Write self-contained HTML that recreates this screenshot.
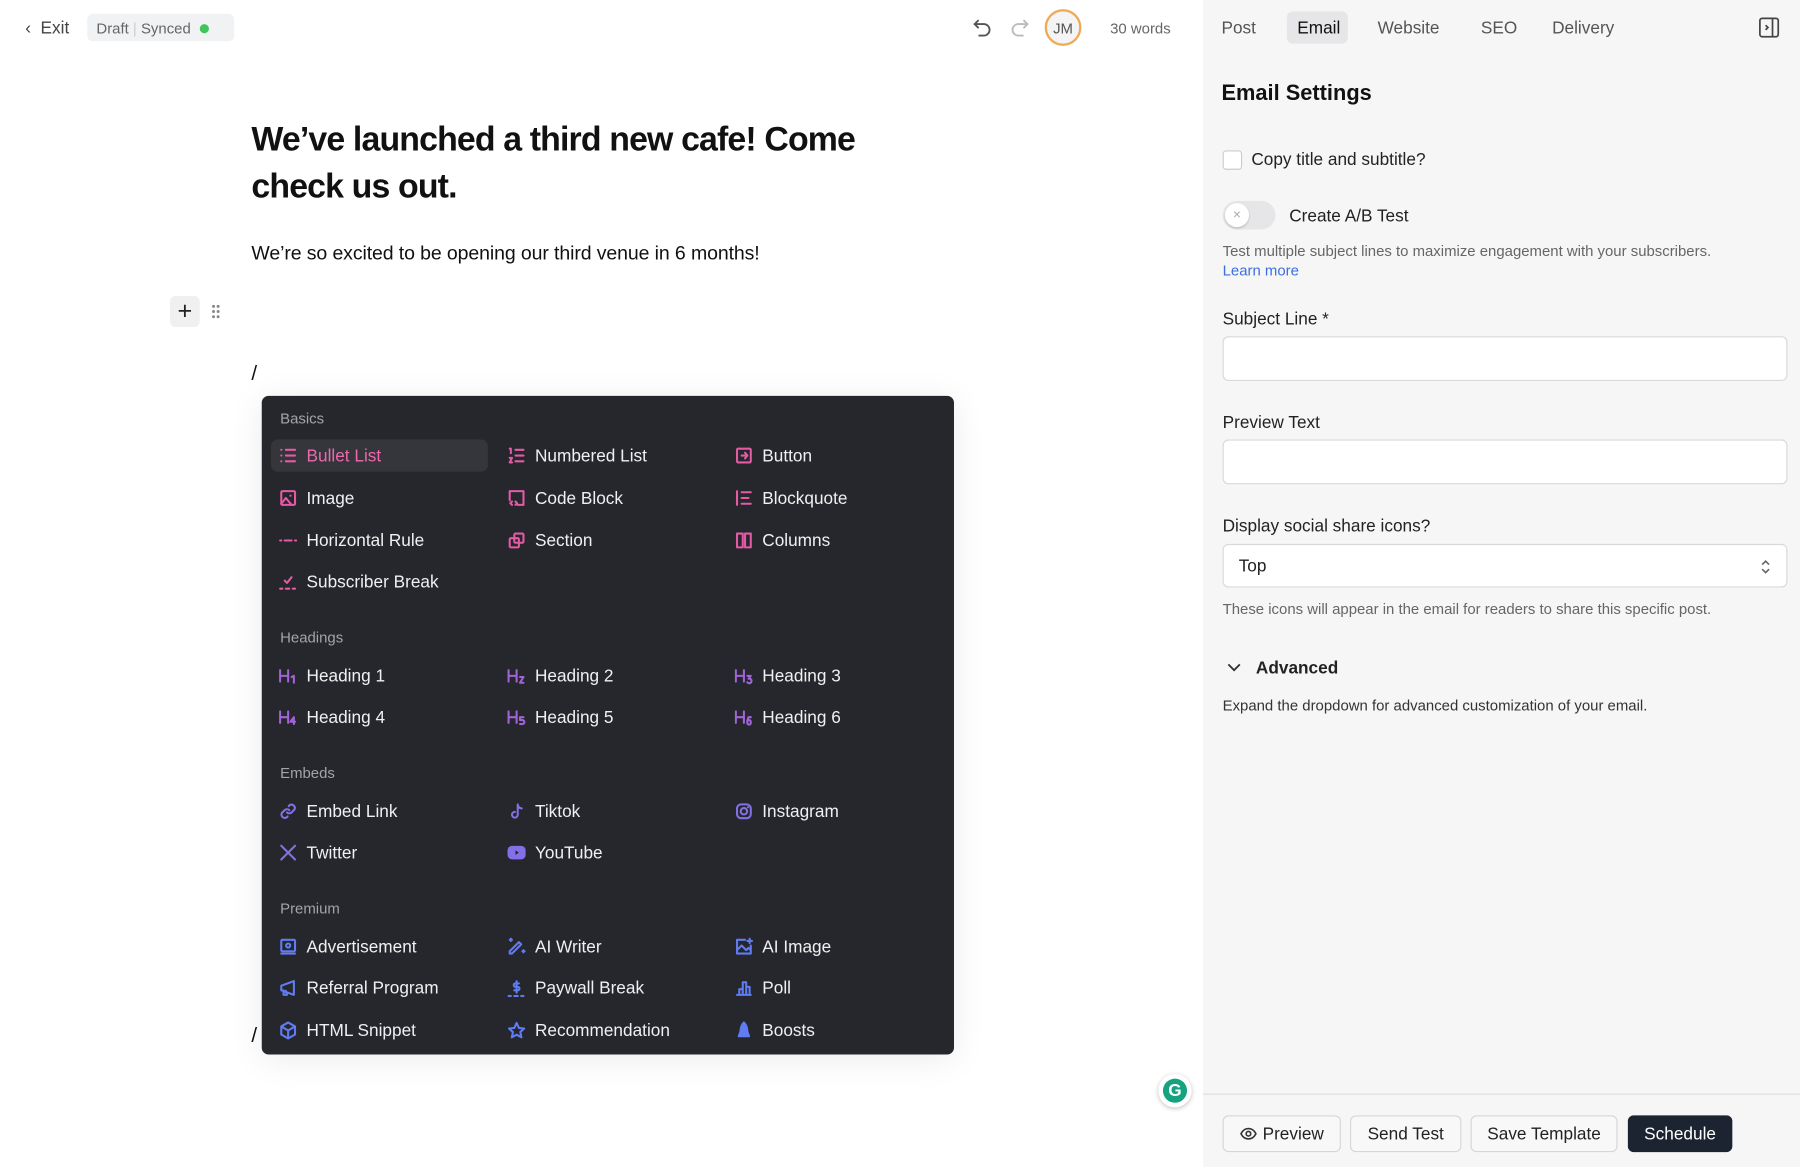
<!DOCTYPE html>
<html><head><meta charset="utf-8"><style>
*{box-sizing:border-box;margin:0;padding:0}
html,body{width:1800px;height:1167px;overflow:hidden;background:#fff;font-family:"Liberation Sans",Arial,sans-serif}
#s{position:absolute;left:0;top:0;width:1568px;height:1017px;transform:scale(1.148,1.1475);transform-origin:0 0}
.a{position:absolute;white-space:nowrap}
.m{position:absolute;left:228px;top:345px;width:603px;height:574px;background:#26272c;border-radius:6px;box-shadow:0 4px 30px rgba(0,0,0,.08)}
.lbl{position:absolute;color:#a3a4aa;font-size:13px}
.it{position:absolute;color:#f0f0f2;font-size:15px;height:20px;line-height:22px;white-space:nowrap}
.it svg{position:absolute;left:-24px;top:2px;width:16px;height:16px;fill:none;stroke-width:1.8;stroke-linecap:round;stroke-linejoin:round}
.p svg{stroke:#e45aa4}.h svg{stroke:#a163d8}.e svg{stroke:#8470e6}.r svg{stroke:#5f7cf2}
.rp{position:absolute;left:1048px;top:0;width:520px;height:1017px;background:#f6f6f6}
.t{color:#555;font-size:15px;position:absolute;top:16px}
.inp{position:absolute;left:1065px;width:492px;background:#fff;border:1px solid #d9d9dc;border-radius:5px}
.fl{position:absolute;left:1065px;font-size:15px;color:#222}
.btn{position:absolute;top:972px;height:32px;border:1px solid #d6d6d9;border-radius:5px;background:#f8f8f8;font-size:15px;color:#222;line-height:31px;text-align:center}
</style></head><body><div id="s">
<!-- top bar -->
<div class="a" style="left:22px;top:16px;font-size:15px;color:#444">‹ &nbsp;Exit</div>
<div class="a" style="left:76px;top:12px;width:128px;height:24px;background:#f1f2f4;border-radius:5px;font-size:13px;color:#666;line-height:25px;padding-left:8px">Draft <span style="color:#ccc">|</span> Synced <span style="display:inline-block;width:8px;height:8px;border-radius:50%;background:#3fc55a;margin-left:4px"></span></div>
<svg class="a" style="left:847px;top:15px" width="18" height="18" viewBox="0 0 18 18" fill="none" stroke="#555" stroke-width="1.6" stroke-linecap="round"><path d="M5 3L2 6l3 3"/><path d="M2 6h8a5 5 0 010 10H6"/></svg>
<svg class="a" style="left:879px;top:15px" width="18" height="18" viewBox="0 0 18 18" fill="none" stroke="#bbb" stroke-width="1.6" stroke-linecap="round"><path d="M13 3l3 3-3 3"/><path d="M16 6H8a5 5 0 000 10h4"/></svg>
<div class="a" style="left:910px;top:8px;width:32px;height:32px;border:2px solid #f0a955;border-radius:50%;background:#f4f4f4;font-size:13px;color:#555;text-align:center;line-height:29px">JM</div>
<div class="a" style="left:967px;top:17px;font-size:13px;color:#666">30 words</div>
<!-- editor -->
<div class="a" style="left:219px;top:101px;font-size:29.5px;font-weight:bold;line-height:41px;color:#111;letter-spacing:-.75px">We’ve launched a third new cafe! Come<br>check us out.</div>
<div class="a" style="left:219px;top:211px;font-size:17px;color:#111;letter-spacing:-.1px">We’re so excited to be opening our third venue in 6 months!</div>
<div class="a" style="left:148px;top:258px;width:26px;height:27px;background:#f0f0f0;border-radius:5px;font-size:22px;line-height:26px;text-align:center;color:#222">+</div>
<svg class="a" style="left:184px;top:265px" width="8" height="13"><g fill="#888"><circle cx="2" cy="2" r="1.3"/><circle cx="6" cy="2" r="1.3"/><circle cx="2" cy="6.5" r="1.3"/><circle cx="6" cy="6.5" r="1.3"/><circle cx="2" cy="11" r="1.3"/><circle cx="6" cy="11" r="1.3"/></g></svg>
<div class="a" style="left:219px;top:315px;font-size:18px;color:#111">/</div>
<div class="a" style="left:219px;top:892px;font-size:18px;color:#111">/</div>
<div class="m">
<div class="lbl" style="left:16px;top:12px">Basics</div>
<div style="position:absolute;left:8px;top:38px;width:189px;height:28px;background:#35363c;border-radius:6px"></div>
<div class="it p" style="left:39px;top:42px;color:#ef66ad"><svg viewBox="0 0 16 16"><path d="M2 3h.1M2 8h.1M2 13h.1M6 3h8M6 8h8M6 13h8"/></svg>Bullet List</div>
<div class="it p" style="left:238px;top:42px"><svg viewBox="0 0 16 16"><path d="M2 2h1v4M2 10h2l-2 4h2M7 3h7M7 8h7M7 13h7"/></svg>Numbered List</div>
<div class="it p" style="left:436px;top:42px"><svg viewBox="0 0 16 16"><rect x="2" y="2" width="12" height="12" rx="1"/><path d="M6 8h5M9 5.5L11 8 9 10.5"/></svg>Button</div>
<div class="it p" style="left:39px;top:79px"><svg viewBox="0 0 16 16"><rect x="2" y="2" width="12" height="12" rx="1"/><path d="M2 13l4-5 5 6M10 6h.1"/></svg>Image</div>
<div class="it p" style="left:238px;top:79px"><svg viewBox="0 0 16 16"><path d="M2 10V2h12v12h-5M4 11l-1.5 1.5L4 14M7 11l1.5 1.5L7 14"/></svg>Code Block</div>
<div class="it p" style="left:436px;top:79px"><svg viewBox="0 0 16 16"><path d="M2 2v12M6 3h8M6 8h6M6 13h8"/></svg>Blockquote</div>
<div class="it p" style="left:39px;top:116px"><svg viewBox="0 0 16 16"><path d="M1 8h1M5 8h6M14 8h1"/></svg>Horizontal Rule</div>
<div class="it p" style="left:238px;top:116px"><svg viewBox="0 0 16 16"><rect x="2" y="6" width="8" height="8" rx="1"/><rect x="6" y="2" width="8" height="8" rx="1"/></svg>Section</div>
<div class="it p" style="left:436px;top:116px"><svg viewBox="0 0 16 16"><rect x="2" y="2" width="5" height="12"/><rect x="9" y="2" width="5" height="12"/></svg>Columns</div>
<div class="it p" style="left:39px;top:152px"><svg viewBox="0 0 16 16"><path d="M5 7l2 2 4-5M1 14h2M6 14h3M12 14h2"/></svg>Subscriber Break</div>
<div class="lbl" style="left:16px;top:203px">Headings</div>
<div class="it h" style="left:39px;top:234px"><svg viewBox="0 0 16 16"><path d="M1 3v10M8 3v10M1 8h7M11 9l2-1v6"/></svg>Heading 1</div>
<div class="it h" style="left:238px;top:234px"><svg viewBox="0 0 16 16"><path d="M1 3v10M8 3v10M1 8h7M11 9h3l-3 5h3"/></svg>Heading 2</div>
<div class="it h" style="left:436px;top:234px"><svg viewBox="0 0 16 16"><path d="M1 3v10M8 3v10M1 8h7M11 8h3l-2 2.5a2 2 0 11-1 3"/></svg>Heading 3</div>
<div class="it h" style="left:39px;top:270px"><svg viewBox="0 0 16 16"><path d="M1 3v10M8 3v10M1 8h7M13 14V8l-3 4h4"/></svg>Heading 4</div>
<div class="it h" style="left:238px;top:270px"><svg viewBox="0 0 16 16"><path d="M1 3v10M8 3v10M1 8h7M14 8h-3v2.5h2a1.7 1.7 0 010 3.5h-2"/></svg>Heading 5</div>
<div class="it h" style="left:436px;top:270px"><svg viewBox="0 0 16 16"><path d="M1 3v10M8 3v10M1 8h7M14 8h-2l-1 3v2a1.5 1.5 0 003 0v-1a1.5 1.5 0 00-3 0"/></svg>Heading 6</div>
<div class="lbl" style="left:16px;top:321px">Embeds</div>
<div class="it e" style="left:39px;top:352px"><svg viewBox="0 0 16 16"><path d="M7 9a3 3 0 004 0l2.5-2.5a3 3 0 00-4-4L8.5 3.5M9 7a3 3 0 00-4 0L2.5 9.5a3 3 0 004 4l1-1"/></svg>Embed Link</div>
<div class="it e" style="left:238px;top:352px"><svg viewBox="0 0 16 16"><path d="M9 2v9a2.5 2.5 0 11-2.5-2.5M9 2a3.5 3.5 0 003.5 3.5"/></svg>Tiktok</div>
<div class="it e" style="left:436px;top:352px"><svg viewBox="0 0 16 16"><rect x="2" y="2" width="12" height="12" rx="3.5"/><circle cx="8" cy="8" r="2.8"/><path d="M11.5 4.5h.1"/></svg>Instagram</div>
<div class="it e" style="left:39px;top:388px"><svg viewBox="0 0 16 16"><path d="M2 2l12 12M14 2L2 14"/></svg>Twitter</div>
<div class="it e" style="left:238px;top:388px"><svg viewBox="0 0 16 16" style="fill:#8470e6"><rect x="1" y="3" width="14" height="10" rx="3"/><path d="M7 6l3 2-3 2z" fill="#26272c" stroke="none"/></svg>YouTube</div>
<div class="lbl" style="left:16px;top:439px">Premium</div>
<div class="it r" style="left:39px;top:470px"><svg viewBox="0 0 16 16"><rect x="2" y="2" width="12" height="10" rx="1"/><circle cx="8" cy="7" r="1.8"/><path d="M2 14h12"/></svg>Advertisement</div>
<div class="it r" style="left:238px;top:470px"><svg viewBox="0 0 16 16"><path d="M4 14l8-8-2-2-8 8v2zM2 2h2M3 1v2M13 12h2M14 11v2"/></svg>AI Writer</div>
<div class="it r" style="left:436px;top:470px"><svg viewBox="0 0 16 16"><path d="M9 2H2v12h12V7M2 11l4-4 4 4 2-2 2 2M13 1v4M11 3h4"/></svg>AI Image</div>
<div class="it r" style="left:39px;top:506px"><svg viewBox="0 0 16 16"><path d="M2 6l11-4v12L2 10zM4 10v4h3l-1-3.5"/></svg>Referral Program</div>
<div class="it r" style="left:238px;top:506px"><svg viewBox="0 0 16 16"><path d="M10 4H7a1.5 1.5 0 000 3h2a1.5 1.5 0 010 3H6M8 2v10M1 15h2M6 15h3M12 15h2"/></svg>Paywall Break</div>
<div class="it r" style="left:436px;top:506px"><svg viewBox="0 0 16 16"><path d="M2 14h12M4 14V9h3v5M7 14V3h3v11M10 14V7h3v7"/></svg>Poll</div>
<div class="it r" style="left:39px;top:543px"><svg viewBox="0 0 16 16"><path d="M8 1l6 3.5v7L8 15l-6-3.5v-7zM2 4.5L8 8l6-3.5M8 8v7"/></svg>HTML Snippet</div>
<div class="it r" style="left:238px;top:543px"><svg viewBox="0 0 16 16"><path d="M8 1.5l2 4.3 4.6.5-3.4 3.1 1 4.6L8 11.7 3.8 14l1-4.6L1.4 6.3 6 5.8z"/></svg>Recommendation</div>
<div class="it r" style="left:436px;top:543px"><svg viewBox="0 0 16 16" style="fill:#5f7cf2"><path d="M8 1c2 2 3 5 3 8l1.5 4h-9L5 9c0-3 1-6 3-8z"/></svg>Boosts</div>
</div>
<div class="a" style="left:1009px;top:936px;width:29px;height:29px;border-radius:50%;background:#fff;box-shadow:0 1px 4px rgba(0,0,0,.25)"><div style="margin:4px;width:21px;height:21px;border-radius:50%;background:#15a37f;color:#fff;font-size:15px;font-weight:bold;text-align:center;line-height:21px">G</div></div>
<!-- right panel -->
<div class="rp"></div>
<div class="a" style="left:1121px;top:10px;width:53px;height:28px;background:#e6e6e8;border-radius:5px"></div>
<div class="t" style="left:1064px">Post</div>
<div class="t" style="left:1130px;color:#111">Email</div>
<div class="t" style="left:1200px">Website</div>
<div class="t" style="left:1290px">SEO</div>
<div class="t" style="left:1352px">Delivery</div>
<svg class="a" style="left:1532px;top:15px" width="18" height="18" viewBox="0 0 18 18" fill="none" stroke="#444" stroke-width="1.5"><rect x="1" y="1" width="16" height="16" rx="2"/><path d="M12 1v16M6 7l2 2-2 2"/></svg>
<div class="a" style="left:1064px;top:71px;font-size:19px;font-weight:bold;color:#111">Email Settings</div>
<div class="a" style="left:1065px;top:131px;width:17px;height:17px;border:1px solid #ccc;border-radius:3px;background:#fff"></div>
<div class="fl" style="left:1090px;top:131px">Copy title and subtitle?</div>
<div class="a" style="left:1065px;top:175px;width:46px;height:25px;border-radius:13px;background:#e6e6e8"><div style="position:absolute;left:2px;top:2px;width:21px;height:21px;border-radius:50%;background:#fff;box-shadow:0 1px 2px rgba(0,0,0,.2);color:#aaa;font-size:12px;text-align:center;line-height:20px">×</div></div>
<div class="fl" style="left:1123px;top:180px">Create A/B Test</div>
<div class="a" style="left:1065px;top:210px;font-size:13px;color:#666;line-height:17px">Test multiple subject lines to maximize engagement with your subscribers.<br><span style="color:#3b6fe0">Learn more</span></div>
<div class="fl" style="top:270px">Subject Line *</div>
<div class="inp" style="top:293px;height:39px"></div>
<div class="fl" style="top:360px">Preview Text</div>
<div class="inp" style="top:383px;height:39px"></div>
<div class="fl" style="top:450px">Display social share icons?</div>
<div class="inp" style="top:474px;height:38px;font-size:15px;line-height:37px;padding-left:13px;color:#222">Top<svg style="position:absolute;right:13px;top:11px" width="10" height="16" viewBox="0 0 10 16" fill="none" stroke="#666" stroke-width="1.4"><path d="M2 6l3-3 3 3M2 10l3 3 3-3"/></svg></div>
<div class="a" style="left:1065px;top:523px;font-size:13px;color:#666">These icons will appear in the email for readers to share this specific post.</div>
<svg class="a" style="left:1069px;top:577px" width="12" height="10" viewBox="0 0 12 10" fill="none" stroke="#333" stroke-width="1.6"><path d="M1 2l5 5 5-5"/></svg>
<div class="fl" style="left:1094px;top:574px;font-weight:bold">Advanced</div>
<div class="a" style="left:1065px;top:607px;font-size:13px;color:#333">Expand the dropdown for advanced customization of your email.</div>
<div class="a" style="left:1048px;top:953px;width:520px;height:1px;background:#ddd"></div>
<div class="btn" style="left:1065px;width:103px"><svg width="15" height="12" viewBox="0 0 15 12" fill="none" stroke="#333" stroke-width="1.4" style="vertical-align:-1px;margin-right:5px"><path d="M1 6c3-6 10-6 13 0-3 6-10 6-13 0z"/><circle cx="7.5" cy="6" r="2"/></svg>Preview</div>
<div class="btn" style="left:1176px;width:97px">Send Test</div>
<div class="btn" style="left:1281px;width:128px">Save Template</div>
<div class="btn" style="left:1418px;width:91px;background:#1c2331;border-color:#1c2331;color:#fff">Schedule</div>
</div></body></html>
